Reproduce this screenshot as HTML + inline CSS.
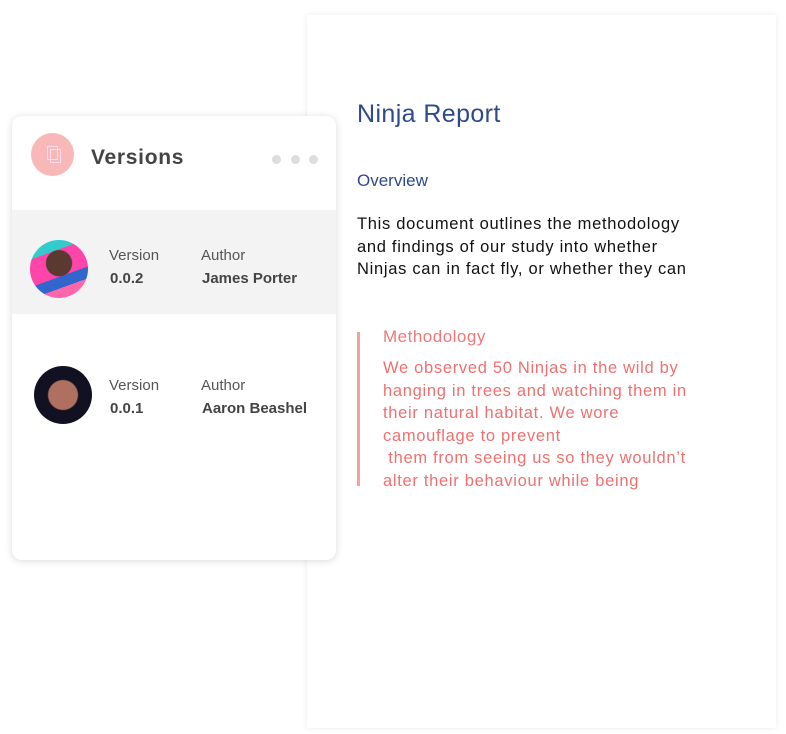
<!DOCTYPE html>
<html><head><meta charset="utf-8"><style>
body{margin:0;width:786px;height:734px;background:#fff;position:relative;overflow:hidden;font-family:"Liberation Sans",sans-serif}
.doc{position:absolute;left:307px;top:15px;width:469px;height:713px;background:#fff;box-shadow:0 0 6px rgba(0,0,0,.08)}
.t{position:absolute;white-space:nowrap}
.card{position:absolute;left:12px;top:116px;width:324px;height:444px;background:#fff;border-radius:10px;box-shadow:0 1px 8px rgba(0,0,0,.15);overflow:hidden}
.row{position:absolute;left:0;width:324px;height:104px}
.av{position:absolute;left:18px;width:58px;height:58px;border-radius:50%}
.lbl{position:absolute;font-size:15px;color:#555}
.val{position:absolute;font-size:15px;font-weight:bold;color:#444}
</style></head><body>
<div class="doc">
<div class="t" style="left:50px;top:85px;font-size:25px;color:#2e4a8c;letter-spacing:.4px">Ninja Report</div>
<div class="t" style="left:50px;top:156px;font-size:17px;color:#2e4a8c">Overview</div>
<div class="t" style="left:50px;top:198px;font-size:16.5px;line-height:22.5px;color:#111;letter-spacing:.7px">This document outlines the methodology<br>and findings of our study into whether<br>Ninjas can in fact fly, or whether they can</div>
<div style="position:absolute;left:50px;top:317px;width:3px;height:154px;background:#f4a0a0"></div>
<div class="t" style="left:76px;top:312px;font-size:17px;color:#f07878;letter-spacing:.5px">Methodology</div>
<div class="t" style="left:76px;top:342px;font-size:16.5px;line-height:22.6px;color:#f07070;letter-spacing:.7px">We observed 50 Ninjas in the wild by<br>hanging in trees and watching them in<br>their natural habitat. We wore<br>camouflage to prevent<br>&nbsp;them from seeing us so they wouldn’t<br>alter their behaviour while being</div>
</div>
<div class="card">
<div style="position:absolute;left:19px;top:17px;width:43px;height:43px;border-radius:50%;background:#f8b8b8"></div>
<div style="position:absolute;left:35px;top:30px;width:9px;height:12px;border:1px solid #fde;"></div>
<div style="position:absolute;left:38px;top:33px;width:9px;height:12px;border:1px solid #fde;"></div>
<div class="t" style="left:79px;top:30px;font-size:21px;font-weight:bold;color:#444;letter-spacing:.7px">Versions</div>
<div style="position:absolute;left:260px;top:39px;width:9px;height:9px;border-radius:50%;background:#ddd"></div>
<div style="position:absolute;left:279px;top:39px;width:9px;height:9px;border-radius:50%;background:#ddd"></div>
<div style="position:absolute;left:297px;top:39px;width:9px;height:9px;border-radius:50%;background:#ddd"></div>
<div class="row" style="top:94px;background:#f3f3f3">
<div class="av" style="top:30px;background:radial-gradient(circle at 50% 40%,#5a3a30 0 28%,transparent 30%),linear-gradient(160deg,#3cc 0 25%,#f4a 25% 60%,#36c 60% 75%,#f6a 75%)"></div>
<div class="lbl" style="left:97px;top:37px">Version</div>
<div class="val" style="left:98px;top:60px">0.0.2</div>
<div class="lbl" style="left:189px;top:37px">Author</div>
<div class="val" style="left:190px;top:60px">James Porter</div>
</div>
<div class="row" style="top:224px">
<div class="av" style="top:26px;left:22px;background:radial-gradient(circle at 50% 50%,#b07060 0 35%,#112 38%)"></div>
<div class="lbl" style="left:97px;top:37px">Version</div>
<div class="val" style="left:98px;top:60px">0.0.1</div>
<div class="lbl" style="left:189px;top:37px">Author</div>
<div class="val" style="left:190px;top:60px">Aaron Beashel</div>
</div>
</div>
</body></html>
